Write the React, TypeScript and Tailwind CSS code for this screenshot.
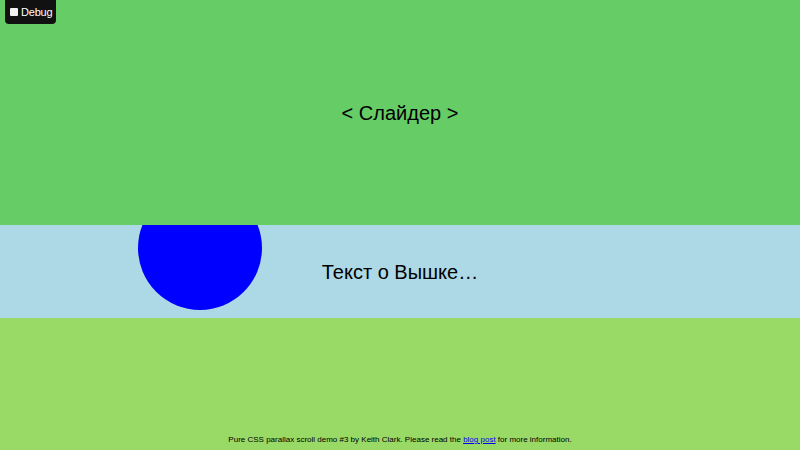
export default function App() {
  return (
    <div className="relative flex h-[450px] w-[800px] flex-col overflow-hidden font-['Liberation_Sans',Arial,sans-serif] text-black">
      <label className="absolute left-[5px] top-0 z-20 flex h-[24px] items-center gap-[3px] rounded-b-[4px] bg-[#111] pl-[5px] pr-[4px] text-[11px] tracking-[-0.2px] text-white">
        <span className="block h-[8px] w-[8px] rounded-[1px] bg-[#f2f2f2]" />
        Debug
      </label>

      <section className="relative z-10 flex h-[225px] items-center justify-center bg-[#66cc66]">
        <h1 className="text-[20px] leading-none">&lt; Слайдер &gt;</h1>
      </section>

      <section className="relative flex h-[93px] items-center justify-center overflow-hidden bg-[#add8e6]">
        <div className="absolute left-[138px] top-[-39px] h-[124px] w-[124px] rounded-full bg-[#0000ff]" />
        <p className="relative text-[20px] leading-none">Текст о Вышке…</p>
      </section>

      <footer className="flex flex-1 items-end justify-center bg-[#99d966] pb-[4px]">
        <p className="text-[8px]">
          Pure CSS parallax scroll demo #3 by Keith Clark. Please read the{" "}
          <a className="text-[#0000ee] underline">blog post</a> for more information.
        </p>
      </footer>
    </div>
  );
}
